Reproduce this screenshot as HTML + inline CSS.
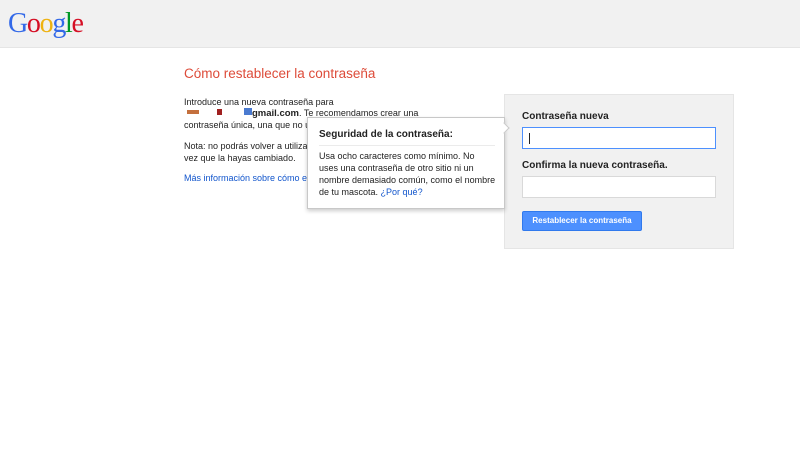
<!DOCTYPE html>
<html><head><meta charset="utf-8"><style>
*{margin:0;padding:0;box-sizing:border-box}
body{width:800px;height:470px;background:#fff;font-family:"Liberation Sans",Arial,sans-serif;position:relative;overflow:hidden;color:#222}
.hd{position:absolute;left:0;top:0;width:800px;height:48px;background:#f1f1f1;border-bottom:1px solid #e5e5e5}
.logo{position:absolute;left:8px;top:8px;font-family:"Liberation Serif",serif;font-size:28px;letter-spacing:-1.3px}
.a{position:absolute;white-space:nowrap}
.t{font-size:9px;line-height:12px;color:#222}
.panel{position:absolute;left:504px;top:94px;width:230px;height:155px;background:#f1f1f1;border:1px solid #e5e5e5}
.lbl{font-size:10px;font-weight:bold;color:#222}
.inp{position:absolute;background:#fff;border:1px solid #d9d9d9;width:194px;height:22px}
.btn{position:absolute;left:522px;top:211px;width:120px;height:20px;background:#4d90fe;border:1px solid #3079ed;border-radius:2px;color:#fff;font-size:8px;font-weight:bold;text-align:center;line-height:18px}
.tip{position:absolute;left:307px;top:117px;width:198px;height:92px;background:#fff;border:1px solid #c8c8c8;box-shadow:0 2px 4px rgba(0,0,0,.2)}
</style></head><body>
<div class="hd"><div class="logo"><span style="color:#3369e8">G</span><span style="color:#d50f25">o</span><span style="color:#eeb211">o</span><span style="color:#3369e8">g</span><span style="color:#009925">l</span><span style="color:#d50f25">e</span></div></div>
<div class="a" style="left:184px;top:66px;font-size:13.5px;color:#dd4b39">Cómo restablecer la contraseña</div>
<div class="a t" style="left:184px;top:96px">Introduce una nueva contraseña para</div>
<div class="a" style="left:187px;top:110px;width:12px;height:4px;background:#c4703d"></div>
<div class="a" style="left:217px;top:109px;width:5px;height:6px;background:#a02020"></div>
<div class="a" style="left:244px;top:108px;width:8px;height:7px;background:#4a7ad0"></div>
<div class="a t" style="left:252px;top:107px"><b style="font-size:9.5px">gmail.com</b>. Te recomendamos crear una</div>
<div class="a t" style="left:184px;top:119px">contraseña única, una que no u</div>
<div class="a t" style="left:184px;top:140px">Nota: no podrás volver a utilizar</div>
<div class="a t" style="left:184px;top:152px">vez que la hayas cambiado.</div>
<div class="a t" style="left:184px;top:172px;color:#15c">Más información sobre cómo e</div>
<div class="panel"></div>
<div class="a lbl" style="left:522px;top:111px">Contraseña nueva</div>
<div class="inp" style="left:522px;top:127px;border-color:#4d90fe"><div style="position:absolute;left:6px;top:5px;width:1px;height:11px;background:#222"></div></div>
<div class="a lbl" style="left:522px;top:160px">Confirma la nueva contraseña.</div>
<div class="inp" style="left:522px;top:176px"></div>
<div class="btn">Restablecer la contraseña</div>
<div class="tip">
<div class="a" style="left:11px;top:11px;font-size:10px;font-weight:bold">Seguridad de la contraseña:</div>
<div class="a" style="left:11px;top:27px;width:176px;height:1px;background:#ebebeb"></div>
<div class="a t" style="left:11px;top:32px;line-height:12px">Usa ocho caracteres como mínimo. No<br>uses una contraseña de otro sitio ni un<br>nombre demasiado común, como el nombre<br>de tu mascota. <span style="color:#15c">¿Por qué?</span></div>
</div>
<div class="a" style="left:500px;top:124px;width:8px;height:8px;background:#fff;border-right:1px solid #c8c8c8;border-top:1px solid #c8c8c8;transform:rotate(45deg)"></div>
</body></html>
